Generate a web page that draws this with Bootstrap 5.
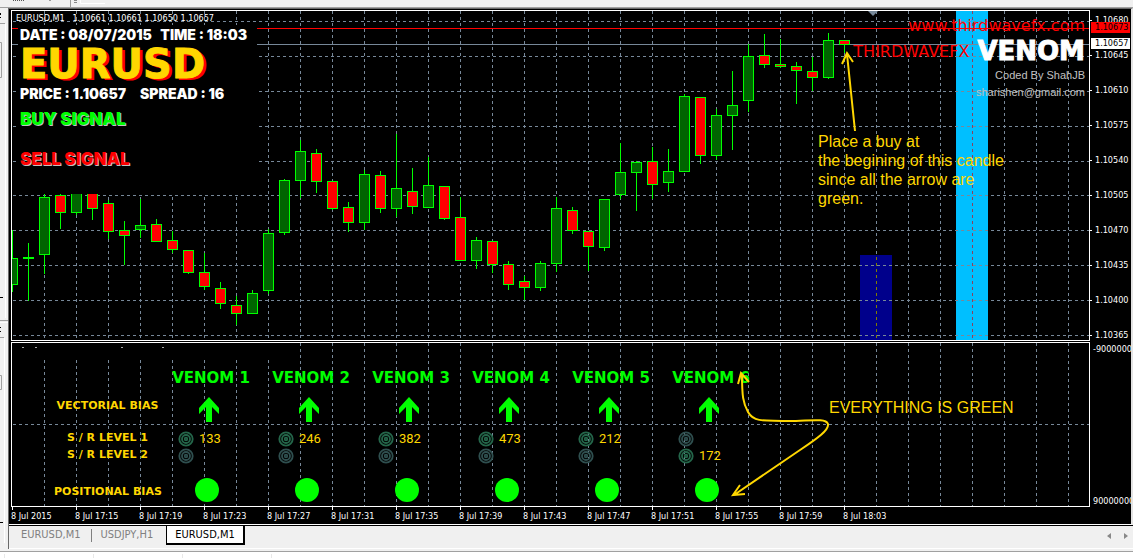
<!DOCTYPE html>
<html lang="en">
<head>
<meta charset="utf-8">
<meta name="viewport" content="width=device-width, initial-scale=1">
<title>EURUSD,M1</title>
<link href="https://cdn.jsdelivr.net/npm/bootstrap@5.3.0/dist/css/bootstrap.min.css" rel="stylesheet">
<style>
:root{--face:#f0f0f0;--lime:#0f0;--gold:#ffd700;--slate:#778899}
body{background:#fff;font-family:"Liberation Sans",Arial,sans-serif;font-size:11px;line-height:17px}
.toolstrip{height:8px;background:var(--face);border-bottom:1px solid #a0a0a0}
.dock{width:9px;background:var(--face);border-right:1px solid #696969}
.ui{font-family:"DejaVu Sans Condensed","DejaVu Sans",sans-serif}
.heavy{font-family:"DejaVu Sans",sans-serif;font-weight:700}
.black-face{font-family:Inter,"Liberation Sans",sans-serif;font-weight:900}
.chartwin{background:#000;border-top:1px solid #696969;border-right:2px solid #e3e3e3;border-bottom:1px solid #fff;padding:1px 0 0 2px}
.plot{border:1px solid #fff;position:relative;overflow:hidden}
.plot-main{height:331px}
.plot-sub{height:165px;margin-top:1px}
.plot>svg.layer{position:absolute;inset:0;width:100%;height:100%}
.plot>.front{position:relative}
.quote{color:#fff;font-size:9px;line-height:14px;padding-left:4px}
.info{background:#000;width:239px;height:169px;margin-left:6px;padding-left:2px;color:#fff;white-space:nowrap}
.info .small-row{font-size:14px;line-height:19px}
.pair{font-size:40px;line-height:40px;color:var(--gold);text-shadow:3px 2px 0 red;-webkit-text-stroke:1px var(--gold)}
.sig{font-size:17px;line-height:24px;text-shadow:1px 1px 0 silver}
.brand{padding:5px 4px 0 0;color:silver}
.site{font-family:"DejaVu Sans",sans-serif;font-size:16px;line-height:20px;color:red}
.site a{color:red;text-decoration:none}
.brandname{font-size:26px;line-height:31px;color:#fff;-webkit-text-stroke:1px #fff}
.note{position:absolute;color:var(--gold);font-size:16px;line-height:19px;white-space:nowrap}
.note-buy{left:806px;top:121px}
.note-all{left:817px;top:55px}
.scale{width:41px;color:#fff;font-size:9px}
.scale-main{height:331px;padding-top:5px}
.scale-main span{height:35px;flex:none;line-height:10px;padding-left:5px;position:relative}
.scale-main span:last-of-type{height:10px}
.scale-main span::before{content:"";position:absolute;left:0;top:5px;width:2px;height:1px;background:#fff}
.tag{position:absolute;z-index:1;left:1px;width:39px;height:11px;line-height:11px;padding-left:4px}
.scale-sub{height:165px;margin-top:1px;overflow:hidden;padding:1px 0 0 3px;line-height:12px}
.times{height:17px;color:#fff;font-size:9px;line-height:12px;overflow:hidden}
.times span{width:64px;flex:none;white-space:nowrap;position:relative;padding-top:3px}
.times span::before{content:"";position:absolute;left:1px;top:0;width:1px;height:3px;background:#fff}
.signals{table-layout:fixed;width:749px;margin-top:23px;border-collapse:collapse;color:var(--gold);line-height:16px}
.signals th,.signals td{padding:0;white-space:nowrap;overflow:visible}
.signals thead th{color:var(--lime);font-size:15px;height:23px;text-align:center}
.signals tbody th{font-size:11px;padding:0 0 2px 42px;text-align:center;line-height:13px}
.signals tbody tr.tall th{padding-bottom:8px}
.signals .lv{font-family:Roboto,"Liberation Sans",sans-serif;font-size:13px;padding-left:17px}
.signals svg{display:block}
.tabs{background:var(--face);border-top:1px solid #000;height:24px;font-size:11px;padding-right:3px;border-bottom:1px solid #fff}
.tabs button{border:0;background:none;color:#808080;padding:0 10px 0 12px;height:18px;line-height:16px;font-size:11px}
.tabs button.second{padding:0 13px 0 9px}
.tabs button.on{background:#fff;color:#000;border:1px solid #000;border-top:0;border-right-width:2px;border-bottom-width:2px;padding:0 8px;height:19px}
.tabs .sep{width:1px;height:13px;background:#808080;margin-top:3px}
.below{background:linear-gradient(var(--face) 2px,#a0a0a0 2px,#a0a0a0 3px,#fff 3px);height:10px;flex:1 0 auto}
.below span{width:89px;height:5px;border-left:1px solid #e8e8e8;margin-top:5px}
</style>
</head>
<body class="d-flex flex-column min-vh-100">
<div class="toolstrip"><svg class="d-block" width="110" height="7"><path d="M13 .5H25" stroke="#555" stroke-dasharray="1 1"/><path d="M50 0v1" stroke="#444"/><path d="M70.500 0V7" stroke="#999"/><path d="M74 .5h3M74 2.500h3" stroke="#888"/><path d="M80.500 0V3.500H105" fill="none" stroke="#fff"/></svg></div>
<div class="d-flex">
  <div class="dock">
    <svg class="d-block" width="8" height="536"><g transform="translate(0,-8)"><path d="M0 13h1v2H0zM0 17h1v1H0zM0 297h3v1H0zM0 327h1v1H0zM0 331h1v1H0zM0 522h3v1H0z"/><path d="M0 23.500H5M0 320.500H8M0 337.500H4M0 42.500h1.500V77.500H0M0 375.500h1.500V389.500H0" fill="none" stroke="#a0a0a0"/><path d="M5.500 24V318M0 322.500H8M4.500 338V543" fill="none" stroke="#fff"/></g></svg>
  </div>
  <div class="flex-grow-1 d-flex flex-column" style="min-width:0">
    <main class="chartwin">
      <div class="d-flex">
        <div class="plot plot-main flex-grow-1">
          <svg class="layer" id="mainLayer" aria-hidden="true"></svg>
          <div class="front d-flex justify-content-between">
            <div>
              <div class="quote ui">EURUSD,M1 &nbsp;&nbsp;1.10661 1.10661 1.10650 1.10657</div>
              <div class="info black-face">
                <div class="small-row">DATE : 08/07/2015 &nbsp; TIME : 18:03</div>
                <div class="pair heavy">EURUSD</div>
                <div class="small-row">PRICE : 1.10657 &nbsp;&nbsp;&nbsp; SPREAD : 16</div>
                <div class="sig mt-1" style="color:#0f0">BUY SIGNAL</div>
                <div class="sig mt-3" style="color:red">SELL SIGNAL</div>
              </div>
            </div>
            <div class="brand d-flex flex-column align-items-end">
              <div class="site"><a href="#">www.thirdwavefx.com</a></div>
              <div class="d-flex align-items-center gap-2"><span class="site">THIRDWAVEFX</span><span class="brandname heavy">VENOM</span></div>
              <div>Coded By ShahJB</div>
              <div>sharishen@gmail.com</div>
            </div>
          </div>
          <div class="note note-buy">Place a buy at<br>the begining of this candle<br>since all the arrow are<br>green.</div>
        </div>
        <div class="scale scale-main ui d-flex flex-column position-relative" id="prices">
          <div class="tag" style="background:red;color:#000;top:12px">1.10673</div>
          <div class="tag" style="background:#fff;color:#000;top:28px">1.10657</div>
        </div>
      </div>
      <div class="d-flex">
        <div class="plot plot-sub flex-grow-1">
          <svg class="layer" id="subLayer" aria-hidden="true"></svg>
          <div class="front">
            <table class="signals heavy">
              <colgroup><col style="width:149px"><col><col><col><col><col><col></colgroup>
              <thead><tr id="heads"><td></td></tr></thead>
              <tbody id="rows"></tbody>
            </table>
          </div>
          <div class="note note-all">EVERYTHING IS GREEN</div>
        </div>
        <div class="scale scale-sub ui d-flex flex-column justify-content-between"><span>-90000000</span><span>90000000</span></div>
      </div>
      <div class="times ui d-flex" id="times"></div>
    </main>
    <nav class="tabs ui d-flex align-items-start" aria-label="Charts">
      <button type="button">EURUSD,M1</button><span class="sep"></span><button type="button" class="second">USDJPY,H1</button><button type="button" class="on">EURUSD,M1</button>
      <svg class="ms-auto mt-1" width="24" height="12"><path d="M5 3v6L1 6zM18 3v6l4-3z" fill="#888"/></svg>
    </nav>
  </div>
</div>
<div class="below d-flex ps-1"><span></span><span></span><span></span><span></span></div>
<script>
// x, body top, body bottom, wick top, wick bottom, rising
const candles=[[12,258,284,230,291,1],[28,257,258,243,300,1],[44,197,254,194,273,1],[60,195,212,194,228,0],[76,193,212,194,214,1],[92,193,208,194,219,0],[108,203,231,200,238,0],[124,230,235,221,264,0],[140,225,229,199,237,1],[156,224,241,219,241,0],[172,240,249,231,252,0],[188,250,272,250,273,0],[204,272,286,253,289,0],[220,288,303,282,308,0],[236,305,313,296,324,0],[252,293,313,290,313,1],[268,233,290,229,293,1],[284,180,232,179,234,1],[300,151,180,140,197,1],[316,153,181,149,192,0],[332,181,208,181,209,0],[348,207,222,202,231,0],[364,174,222,170,229,1],[380,175,208,171,212,0],[396,188,208,134,216,1],[412,191,206,168,213,0],[428,185,207,157,207,1],[444,186,218,186,219,0],[460,217,260,197,260,0],[476,240,260,237,268,1],[492,241,264,241,272,0],[508,264,284,261,289,0],[524,281,287,276,299,0],[540,263,287,261,290,1],[556,208,263,197,271,1],[572,210,230,207,233,0],[588,231,246,231,270,0],[604,199,247,199,250,1],[620,172,194,143,198,1],[636,162,172,161,210,1],[652,161,184,147,198,0],[668,171,182,149,191,1],[684,96,171,94,171,1],[700,97,155,97,163,0],[716,115,155,109,159,1],[732,105,115,71,149,1],[748,56,100,44,111,1],[764,55,64,34,67,0],[780,64,66,39,67,0],[796,66,70,62,103,0],[812,71,77,57,90,0],[828,40,77,33,78,1],[844,40,44,40,52,0]];
const line=(x1,y1,x2,y2,c,d='')=>`<path d="M${x1} ${y1}L${x2} ${y2}" stroke="${c}" ${d?'stroke-dasharray="'+d+'"':''} fill="none"/>`;
let s='<g transform="translate(-12,-11)"><rect x="956" y="11" width="32" height="329" fill="#00bfff"/><rect x="860" y="255" width="32" height="85" fill="#00008b"/>';
for(const y of [21,56,91,126,161,195,230,265,300,335]) s+=line(13,y+.5,2600,y+.5,'#778899','3 3');
for(let x=44;x<2600;x+=32) s+=line(x+.5,11,x+.5,x===876?255:340,x===972?'#8b4060':'#778899','3 3');
s+=line(876.5,257,876.5,340,'#808000','3 3')+line(12,28.5,2600,28.5,'red')+line(12,44.5,2600,44.5,'#778899')+'<path d="M868 11h10l-5 5z" fill="#778899"/>';
for(const [x,a,b,t,u,up] of candles) s+=`<path d="M${x} ${t}h1V${u+1}h-1z" fill="#0f0"/><rect x="${x-4.5}" y="${a+.5}" width="10" height="${b-a}" fill="${up?'#006400':'red'}" stroke="#0f0"/>`;
s+='<path d="M855 131L847 54M842 64L847 53L853 62" fill="none" stroke="#ffd700" stroke-width="2"/></g>';
mainLayer.innerHTML=s;
s='<g transform="translate(-12,-343)">';
for(let x=44;x<2600;x+=32) s+=line(x+.5,x<270?360:343,x+.5,506,'#778899','3 3');
s+=line(13,424.5,2600,424.5,'#778899','3 3')+'<path fill="#aaa" d="M22 347h2v1h-2zM35 347h2v1h-2zM121 347h2v1h-2zM162 347h2v1h-2z"/></g>';
subLayer.innerHTML=s;
prices.insertAdjacentHTML('afterbegin',['680','645','610','575','540','505','470','435','400','365'].map(v=>`<span>1.10${v}</span>`).join(''));
times.innerHTML=['2015','17:15','17:19','17:23','17:27','17:31','17:35','17:39','17:43','17:47','17:51','17:55','17:59','18:03'].map(v=>`<span>8 Jul ${v}</span>`).join('');
for(let i=1;i<7;i++) heads.innerHTML+=`<th scope="col">VENOM ${i}</th>`;
const six=f=>[0,1,2,3,4,5].map(f).join('');
const ring=on=>`<svg width="16" height="16" fill="none" stroke="${on?'#24664a':'#2f4f4f'}" stroke-width="1.800"><circle cx="8" cy="8" r="6.700"/><circle cx="8" cy="8" r="4"/><circle cx="8" cy="8" r="1.300"/></svg>`;
const level=(on,v)=>`<td class="lv fw-normal"><div class="d-flex align-items-center" style="gap:5px">${ring(on)}<span>${v}</span></div></td>`;
rows.innerHTML=
`<tr class="tall" style="height:41px"><th scope="row">VECTORIAL BIAS</th>${six(()=>'<td style="padding-left:38px"><svg width="20" height="25" fill="#0f0"><path d="M10 0L20 11V17L13 10V25H7V10L0 17V11z"/></svg></td>')}</tr>
<tr style="height:17px"><th scope="row">S / R LEVEL 1</th>${six(i=>level(i<5,[133,246,382,473,212,''][i]))}</tr>
<tr style="height:17px"><th scope="row">S / R LEVEL 2</th>${six(i=>level(i===5,i===5?172:''))}</tr>
<tr class="tall align-bottom" style="height:42px"><th scope="row">POSITIONAL BIAS</th>${six(()=>'<td style="padding:0 0 4px 34px"><svg width="24" height="24" fill="#0f0"><circle cx="12" cy="12" r="12"/></svg></td>')}</tr>`;
subLayer.insertAdjacentHTML('afterend','<svg class="layer" style="z-index:1" aria-hidden="true"><path transform="translate(-12,-343)" d="M742 374C742 396 743 403 748 412C753 421 758 421 793 421C817 420 826 419 828 424C829 430 818 438 800 450L734 495M738 384L741 373L749 382M740 485L733 495L745 494" fill="none" stroke="#ffd700" stroke-width="2"/></svg>');
</script>
<script src="https://cdn.jsdelivr.net/npm/bootstrap@5.3.0/dist/js/bootstrap.bundle.min.js"></script>
</body>
</html>
